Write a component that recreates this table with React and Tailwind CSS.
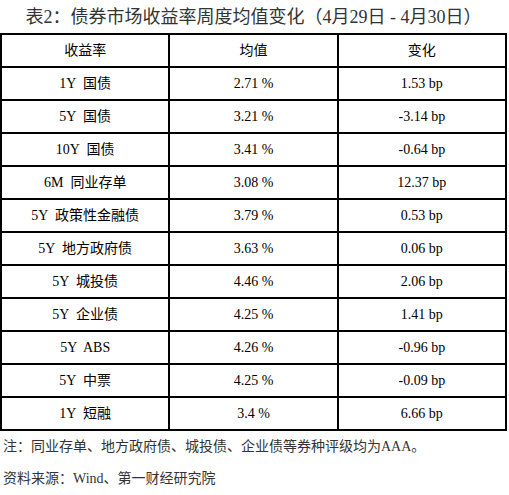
import React from "react";

const rows = [
  ["1Y  国债", "2.71 %", "1.53 bp"],
  ["5Y  国债", "3.21 %", "-3.14 bp"],
  ["10Y  国债", "3.41 %", "-0.64 bp"],
  ["6M  同业存单", "3.08 %", "12.37 bp"],
  ["5Y  政策性金融债", "3.79 %", "0.53 bp"],
  ["5Y  地方政府债", "3.63 %", "0.06 bp"],
  ["5Y  城投债", "4.46 %", "2.06 bp"],
  ["5Y  企业债", "4.25 %", "1.41 bp"],
  ["5Y  ABS", "4.26 %", "-0.96 bp"],
  ["5Y  中票", "4.25 %", "-0.09 bp"],
  ["1Y  短融", "3.4 %", "6.66 bp"],
];

const font = { fontFamily: '"Liberation Serif", "Noto Sans CJK SC", serif' };

export default function App() {
  return (
    <div className="w-[509px] h-[495px] bg-white" style={font}>
      <div className="h-[33px] flex items-center justify-center pr-[2px] text-[18px] text-[#333333] leading-none">
        表2：债券市场收益率周度均值变化（4月29日 - 4月30日）
      </div>
      <div className="w-[507px] grid grid-cols-3 border-l-2 border-t-2 border-black text-[14px] text-black">
        {["收益率", "均值", "变化"].map((h) => (
          <div key={h} className="h-[33px] border-r-2 border-b-2 border-black flex items-center justify-center">
            {h}
          </div>
        ))}
        {rows.map((r, i) =>
          r.map((c, j) => (
            <div key={i + "-" + j} className="h-[33px] border-r-2 border-b-2 border-black flex items-center justify-center whitespace-pre">
              {c}
            </div>
          ))
        )}
      </div>
      <div className="pl-[3px] text-[14px] text-[#333333]">
        <div className="h-[30px] flex items-center">注：同业存单、地方政府债、城投债、企业债等券种评级均为AAA。</div>
        <div className="h-[34px] flex items-center">资料来源：Wind、第一财经研究院</div>
      </div>
    </div>
  );
}
